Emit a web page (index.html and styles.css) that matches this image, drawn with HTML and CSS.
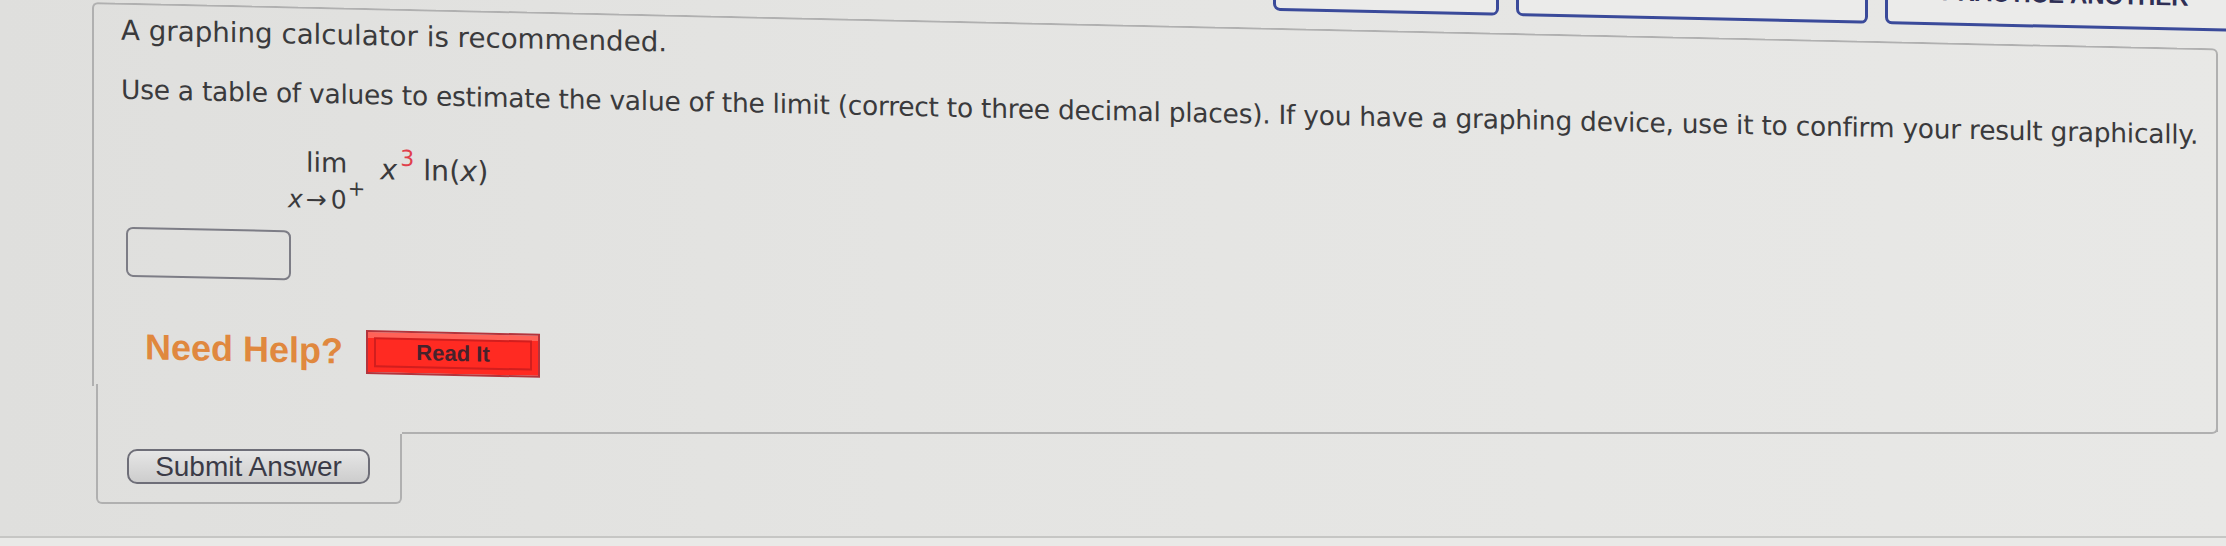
FILE: index.html
```html
<!DOCTYPE html>
<html>
<head>
<meta charset="utf-8">
<link rel="stylesheet" href="styles.css">
</head>
<body>
<div class="sheet">
  <div class="upper">
    <div class="toolbar">
      <div class="tool tool-notes"></div>
      <div class="tool tool-ask"></div>
      <div class="tool tool-practice"><span class="tool-label">PRACTICE ANOTHER</span></div>
    </div>
    <div class="panel">
      <p class="line line1">A graphing calculator is recommended.</p>
      <p class="line line2">Use a table of values to estimate the value of the limit (correct to three decimal places). If you have a graphing device, use it to confirm your result graphically.</p>
      <div class="limit">
        <div class="lim-col">
          <span class="lim">lim</span>
          <span class="sub"><i>x</i><span class="arrow">→</span>0<sup class="plus">+</sup></span>
        </div>
        <div class="expr"><i>x</i><sup class="pow">3</sup> ln(<i>x</i>)</div>
      </div>
      <div class="answer-box"></div>
      <div class="help-row">
        <span class="need-help">Need Help?</span>
        <button class="read-it"><span class="read-it-inner">Read It</span></button>
      </div>
    </div>
  </div>
  <div class="lower">
    <div class="panel-bottom">
      <div class="tab-top"></div>
      <div class="bottom-rest"></div>
    </div>
    <div class="submit-tab">
      <button class="submit">Submit Answer</button>
    </div>
  </div>
  <div class="next-panel"></div>
</div>
</body>
</html>
```
FILE: styles.css
```css
html, body {
  margin: 0;
  padding: 0;
}
body {
  width: 2226px;
  height: 546px;
  overflow: hidden;
  background: linear-gradient(90deg, #dfdfdd 0%, #e4e4e2 40%, #e8e8e6 100%);
  font-family: "DejaVu Sans", Verdana, sans-serif;
  color: #3a3a3c;
}
.sheet {
  width: 2226px;
}
.upper {
  margin-top: -70px;
  transform: skewY(1.25deg);
  transform-origin: 0 0;
}
.toolbar {
  height: 70px;
  box-sizing: border-box;
  padding: 8px 0 17px 1273px;
  display: flex;
  gap: 17px;
  align-items: stretch;
}
.tool {
  box-sizing: border-box;
  flex: none;
  border: 3px solid #3a4a9a;
  border-radius: 7px;
  background: #ebebea;
  display: flex;
  justify-content: center;
  align-items: flex-start;
}
.tool-label {
  font: bold 24px/24px "Liberation Sans", Arial, sans-serif;
  color: #2e2f55;
  white-space: nowrap;
  margin-top: -3px;
}
.tool-notes { width: 226px; }
.tool-ask { width: 352px; }
.tool-practice { width: 360px; }

.panel {
  margin: 0 8px 0 92px;
  border: 2px solid #b0b0b0;
  border-bottom: none;
  border-radius: 6px 6px 0 0;
  padding: 9px 0 18px 27px;
}
.line {
  margin: 0;
  font-size: 27.7px;
  line-height: 34px;
  white-space: nowrap;
}
.line2 {
  margin-top: 25px;
  font-size: 26.5px;
  letter-spacing: -0.27px;
}
.limit {
  display: flex;
  align-items: flex-start;
  margin: 33px 0 0 167px;
}
.lim-col {
  display: flex;
  flex-direction: column;
  align-items: center;
  margin-top: 4px;
}
.lim {
  font-size: 27px;
  line-height: 30px;
}
.sub {
  font-size: 25px;
  line-height: 26px;
  margin-top: 9px;
  white-space: nowrap;
}
.arrow {
  margin: 0 4px 0 3px;
}
.plus {
  font-size: 21px;
  line-height: 0;
  vertical-align: 13px;
  margin-left: 1px;
}
.expr {
  font-size: 28.5px;
  line-height: 30px;
  margin: 10px 0 0 15px;
  white-space: nowrap;
}
.pow {
  color: #e0404c;
  font-size: 22px;
  line-height: 0;
  vertical-align: 14px;
  margin-left: 3px;
}
.answer-box {
  width: 165px;
  height: 50px;
  box-sizing: border-box;
  border: 2px solid #7d7d86;
  border-radius: 7px;
  margin: 18px 0 0 5px;
}
.help-row {
  display: flex;
  align-items: center;
  height: 44px;
  margin: 48px 0 0 24px;
  gap: 23px;
}
.need-help {
  font: bold 36px/44px "Liberation Sans", Arial, sans-serif;
  color: #e0883e;
}
.read-it {
  width: 174px;
  height: 44px;
  box-sizing: border-box;
  border: 2px solid #b3343c;
  background: linear-gradient(#ff6258 0, #ff6258 14%, #ff2a22 14%, #ff2a22 100%);
  padding: 5px 6px;
  margin: 0;
  display: flex;
}
.read-it-inner {
  flex: 1;
  border: 2px solid #d21e1e;
  display: flex;
  align-items: center;
  justify-content: center;
  font: bold 22px/1 "Liberation Sans", Arial, sans-serif;
  color: #46222c;
}

.lower {
  margin: 0 8px 0 96px;
}
.panel-bottom {
  display: flex;
  height: 50px;
}
.tab-top {
  flex: none;
  width: 306px;
  box-sizing: border-box;
  border-left: 2px solid #b0b0b0;
}
.bottom-rest {
  flex: 1;
  border-right: 2px solid #b0b0b0;
  border-bottom: 2px solid #b0b0b0;
  border-bottom-right-radius: 6px;
}
.submit-tab {
  width: 306px;
  box-sizing: border-box;
  border: 2px solid #b0b0b0;
  border-top: none;
  border-radius: 0 0 6px 6px;
  padding: 15px 0 18px 29px;
}
.submit {
  display: block;
  width: 243px;
  height: 35px;
  box-sizing: border-box;
  padding: 0;
  border: 2px solid #6e6e78;
  border-radius: 10px;
  background: linear-gradient(#e6e6e6, #cdcdcd);
  font: 28px/31px "Liberation Sans", Arial, sans-serif;
  color: #3b3b47;
}
.next-panel {
  margin-top: 32px;
  border-top: 2px solid #c6c6c4;
  height: 20px;
  background: #e9e9e7;
}
```
